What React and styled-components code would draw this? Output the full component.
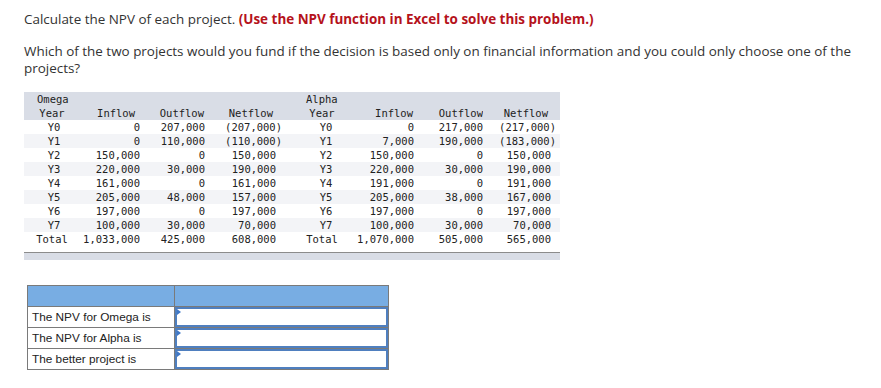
import styled, { createGlobalStyle } from "styled-components";

const GlobalStyle = createGlobalStyle`
  body {
    margin: 0;
    background: #ffffff;
  }
`;

const Page = styled.div`
  padding: 11px 0 0 24px;
  font-family: "Open Sans", Lato, sans-serif;
  font-size: 13.45px;
  line-height: 17px;
  color: #333333;
`;

const Para = styled.p`
  margin: 0 0 ${(p) => p.$after || 0}px 0;
  width: ${(p) => p.$width || "auto"};
`;

const Hint = styled.strong`
  color: #b5121b;
  font-weight: 700;
`;

const Data = styled.div`
  margin-top: 15px;
  width: 536px;
  display: grid;
  grid-template-columns: 56px 60px 65px 77px 6px 68px 58px 69px 77px;
  font-family: "DejaVu Sans Mono", "Liberation Mono", monospace;
  font-size: 10.5px;
  line-height: 14px;
  color: #222222;
`;

const Row = styled.div`
  display: contents;
  & > span {
    background: ${(p) => p.$bg || "#ffffff"};
    white-space: nowrap;
    height: 14px;
  }
`;

const Label = styled.span`
  text-align: left;
  padding-left: ${(p) => p.$pad || 0}px;
`;

const Mid = styled.span`
  text-align: center;
  padding-left: ${(p) => p.$shift || 0}px;
`;

const Num = styled.span`
  text-align: right;
  padding-right: ${(p) => p.$pad || 0}px;
`;

const Gap = styled.span``;

const Foot = styled.div`
  margin-top: 6px;
  width: 536px;
  height: 7px;
  border-top: 1px solid #8c8c8c;
  background: #d9dde6;
`;

const Answers = styled.table`
  margin: 25px 0 0 3px;
  width: 362px;
  border-collapse: collapse;
  font-family: "Liberation Sans", Arial, sans-serif;
  font-size: 11.8px;
  color: #222222;

  td, th {
    border: 1px solid #7a7a7a;
    padding: 0;
  }
`;

const HeadCell = styled.th`
  height: 20px;
  background: #78ade3;
  width: ${(p) => p.$w}px;
`;

const Text = styled.td`
  height: 19px;
  padding-left: 4px !important;
  text-align: left;
`;

const Slot = styled.td`
  position: relative;
`;

const Field = styled.div`
  height: 16px;
  border: 2px solid #4f7fbf;
  background: #ffffff;
`;

const Marker = styled.span`
  position: absolute;
  left: 2px;
  top: 2px;
  width: 0;
  height: 0;
  border-top: 3px solid transparent;
  border-bottom: 3px solid transparent;
  border-left: 4px solid #3f78c8;
`;

const HEAD = "#d9dde6";
const ALT = "#f3f4f7";

const omega = [
  ["Y0", "0", "207,000", "(207,000)"],
  ["Y1", "0", "110,000", "(110,000)"],
  ["Y2", "150,000", "0", "150,000"],
  ["Y3", "220,000", "30,000", "190,000"],
  ["Y4", "161,000", "0", "161,000"],
  ["Y5", "205,000", "48,000", "157,000"],
  ["Y6", "197,000", "0", "197,000"],
  ["Y7", "100,000", "30,000", "70,000"],
  ["Total", "1,033,000", "425,000", "608,000"],
];

const alpha = [
  ["Y0", "0", "217,000", "(217,000)"],
  ["Y1", "7,000", "190,000", "(183,000)"],
  ["Y2", "150,000", "0", "150,000"],
  ["Y3", "220,000", "30,000", "190,000"],
  ["Y4", "191,000", "0", "191,000"],
  ["Y5", "205,000", "38,000", "167,000"],
  ["Y6", "197,000", "0", "197,000"],
  ["Y7", "100,000", "30,000", "70,000"],
  ["Total", "1,070,000", "505,000", "565,000"],
];

const neg = (v) => v.startsWith("(");

export default function App() {
  return (
    <>
      <GlobalStyle />
      <Page>
        <Para $after={15}>
          Calculate the NPV of each project.{" "}
          <Hint>(Use the NPV function in Excel to solve this problem.)</Hint>
        </Para>
        <Para $width="845px">
          Which of the two projects would you fund if the decision is based only on
          financial information and you could only choose one of the projects?
        </Para>

        <Data>
          <Row $bg={HEAD}>
            <Label $pad={13}>Omega</Label>
            <span /><span /><span />
            <Gap />
            <Label $pad={18}>Alpha</Label>
            <span /><span /><span />
          </Row>
          <Row $bg={HEAD}>
            <Mid>Year</Mid>
            <Num $pad={5}>Inflow</Num>
            <Num $pad={1}>Outflow</Num>
            <Num $pad={9}>Netflow</Num>
            <Gap />
            <Mid>Year</Mid>
            <Num $pad={1}>Inflow</Num>
            <Num $pad={0}>Outflow</Num>
            <Num $pad={12}>Netflow</Num>
          </Row>
          {omega.map((o, i) => {
            const a = alpha[i];
            const bg = i % 2 === 1 ? ALT : "#ffffff";
            return (
              <Row key={o[0]} $bg={bg}>
                <Mid $shift={o[0] === "Total" ? 0 : 4}>{o[0]}</Mid>
                <Num>{o[1]}</Num>
                <Num>{o[2]}</Num>
                <Num $pad={neg(o[3]) ? 0 : 6}>{o[3]}</Num>
                <Gap />
                <Mid $shift={a[0] === "Total" ? 0 : 8}>{a[0]}</Mid>
                <Num>{a[1]}</Num>
                <Num>{a[2]}</Num>
                <Num $pad={neg(a[3]) ? 4 : 9}>{a[3]}</Num>
              </Row>
            );
          })}
        </Data>
        <Foot />

        <Answers>
          <thead>
            <tr>
              <HeadCell $w={146} />
              <HeadCell $w={214} />
            </tr>
          </thead>
          <tbody>
            {["The NPV for Omega is", "The NPV for Alpha is", "The better project is"].map((t) => (
              <tr key={t}>
                <Text>{t}</Text>
                <Slot>
                  <Field />
                  <Marker />
                </Slot>
              </tr>
            ))}
          </tbody>
        </Answers>
      </Page>
    </>
  );
}
